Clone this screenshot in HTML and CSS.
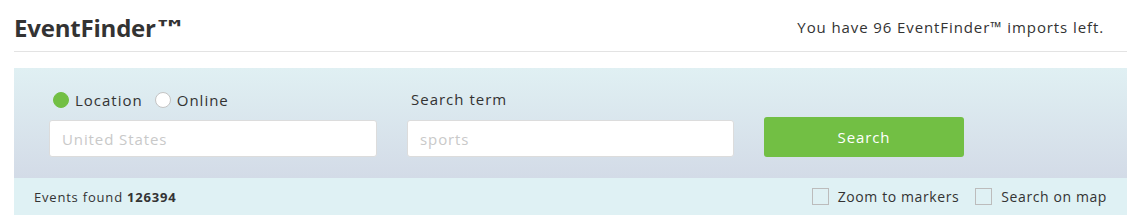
FILE: index.html
```html
<!DOCTYPE html>
<html lang="en">
<head>
<meta charset="utf-8">
<title>EventFinder</title>
<link rel="stylesheet" href="styles.css">
</head>
<body>
<div class="page">
  <header class="top">
    <h1 class="title">EventFinder<span class="tm">™</span></h1>
    <div class="quota">You have 96 EventFinder™ imports left.</div>
  </header>
  <section class="panel">
    <div class="form">
      <div class="field field-loc">
        <div class="radios">
          <label class="radio"><span class="dot dot-on"></span>Location</label>
          <label class="radio"><span class="dot"></span>Online</label>
        </div>
        <input class="input" type="text" placeholder="United States">
      </div>
      <div class="field field-term">
        <div class="label">Search term</div>
        <input class="input" type="text" placeholder="sports">
      </div>
      <button class="btn" type="button">Search</button>
    </div>
    <div class="status">
      <div class="found">Events found <b>126394</b></div>
      <div class="checks">
        <label class="check"><span class="box"></span>Zoom to markers</label>
        <label class="check"><span class="box"></span>Search on map</label>
      </div>
    </div>
  </section>
</div>
</body>
</html>
```
FILE: styles.css
```css
* { box-sizing: border-box; }
html, body { margin: 0; padding: 0; background: #fff; }
body {
  font-family: "Open Sans", "Noto Sans", sans-serif;
  color: #333;
}
.page { padding: 0 10px 0 14px; }
.top {
  display: flex;
  justify-content: space-between;
  align-items: center;
  height: 52px;
  border-bottom: 1px solid #e3e3e3;
  padding: 3px 23px 0 0;
}
.title {
  margin: 0;
  font-size: 24px;
  font-weight: 700;
  color: #333;
  letter-spacing: -0.2px;
  display: flex;
  align-items: flex-start;
}
.tm {
  display: inline-block;
  font-family: "DejaVu Sans", sans-serif;
  font-size: 22px;
  font-weight: 700;
  line-height: 1;
  letter-spacing: 0;
  margin-top: 7px;
  transform: scaleX(1.55);
  transform-origin: 20% center;
}
.quota {
  font-size: 15px;
  color: #333;
  letter-spacing: 0.9px;
}
.panel { margin-top: 16px; }
.form {
  display: flex;
  align-items: flex-end;
  height: 110px;
  padding: 0 0 21px 35px;
  background: linear-gradient(#e0f0f3, #d3dbe7);
}
.field { display: flex; flex-direction: column; }
.field-loc { width: 328px; }
.field-term { width: 327px; margin-left: 30px; }
.radios { display: flex; align-items: center; height: 20px; margin-bottom: 10px; margin-left: 4px; }
.radio { display: flex; align-items: center; font-size: 15px; color: #333; margin-right: 12px; letter-spacing: 1px; }
.dot {
  width: 16px; height: 16px; border-radius: 50%;
  border: 1px solid #c4c4c4; background: #fff;
  margin-right: 6px;
}
.dot-on { background: #72bf44; border-color: #72bf44; }
.label { font-size: 15px; color: #333; height: 20px; margin: 0 0 11px 4px; letter-spacing: 1px; }
.input {
  height: 37px;
  border: 1px solid #dcdcdc;
  border-radius: 3px;
  background: #fff;
  padding: 0 12px;
  font-family: inherit;
  font-size: 15px;
  letter-spacing: 0.9px;
  color: #333;
  outline: none;
}
.input::placeholder { color: #c9c9c9; }
.btn {
  width: 200px; height: 40px;
  margin-left: 30px;
  background: #72bf44;
  border: none; border-radius: 3px;
  color: #fff;
  font-family: inherit;
  font-size: 15px;
  letter-spacing: 0.9px;
}
.status {
  display: flex;
  justify-content: space-between;
  align-items: center;
  height: 37px;
  background: #dff1f4;
  padding: 0 20px;
}
.found { font-size: 13px; color: #333; letter-spacing: 0.8px; }
.found b { font-weight: 700; }
.checks { display: flex; align-items: center; }
.check { display: flex; align-items: center; font-size: 14px; color: #333; margin-left: 16px; letter-spacing: 0.6px; }
.box {
  width: 17px; height: 17px;
  border: 1px solid #bcbcbc;
  background: transparent;
  margin-right: 9px;
}
```
